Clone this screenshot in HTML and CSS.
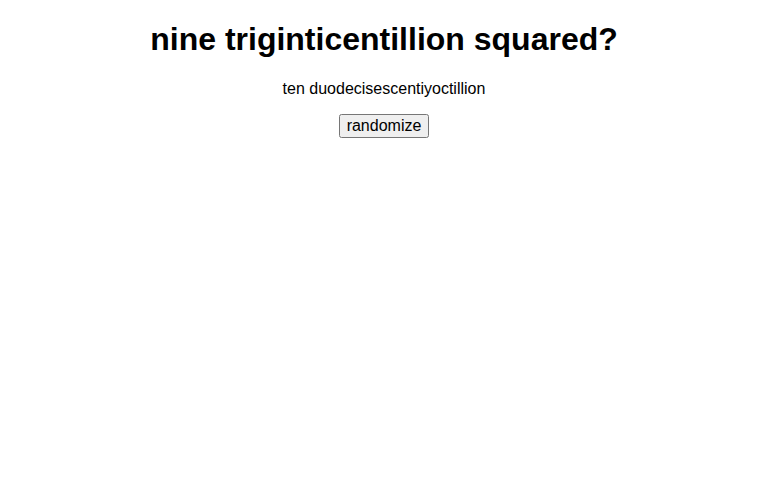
FILE: index.html
```html
<!DOCTYPE html>
<html lang="en">
<head>
    <meta charset="UTF-8">
    <meta name="viewport" content="width=device-width, initial-scale=1.0">
    <title>Big Numbers</title>
    <link rel="stylesheet" href="styles.css">
</head>
<body>
    <div class="container">
        <h1 id="question">nine triginticentillion squared?</h1>
        <p id="answer">ten duodecisescentiyoctillion</p>
        <button id="randomize" onclick="randomize()">randomize</button>
    </div>

    <script>
        const ones = ["one", "two", "three", "four", "five", "six", "seven", "eight", "nine", "ten"];
        const names = ["triginticentillion", "duodecisescentiyoctillion", "quinquagintillion", "sexdecillion", "octoquadragintillion"];

        function pick(list) {
            return list[Math.floor(Math.random() * list.length)];
        }

        function randomize() {
            document.getElementById("question").textContent = pick(ones) + " " + pick(names) + " squared?";
            document.getElementById("answer").textContent = pick(ones) + " " + pick(names);
        }
    </script>
</body>
</html>
```

FILE: styles.css
```css
body {
    font-family: Arial, "Liberation Sans", sans-serif;
    color: #000;
    background: #fff;
    margin: 0;
}
.container {
    text-align: center;
}
h1 {
    font-size: 32px;
}
p {
    font-size: 16px;
}
button {
    font-family: Arial, "Liberation Sans", sans-serif;
    font-size: 16px;
}
```
